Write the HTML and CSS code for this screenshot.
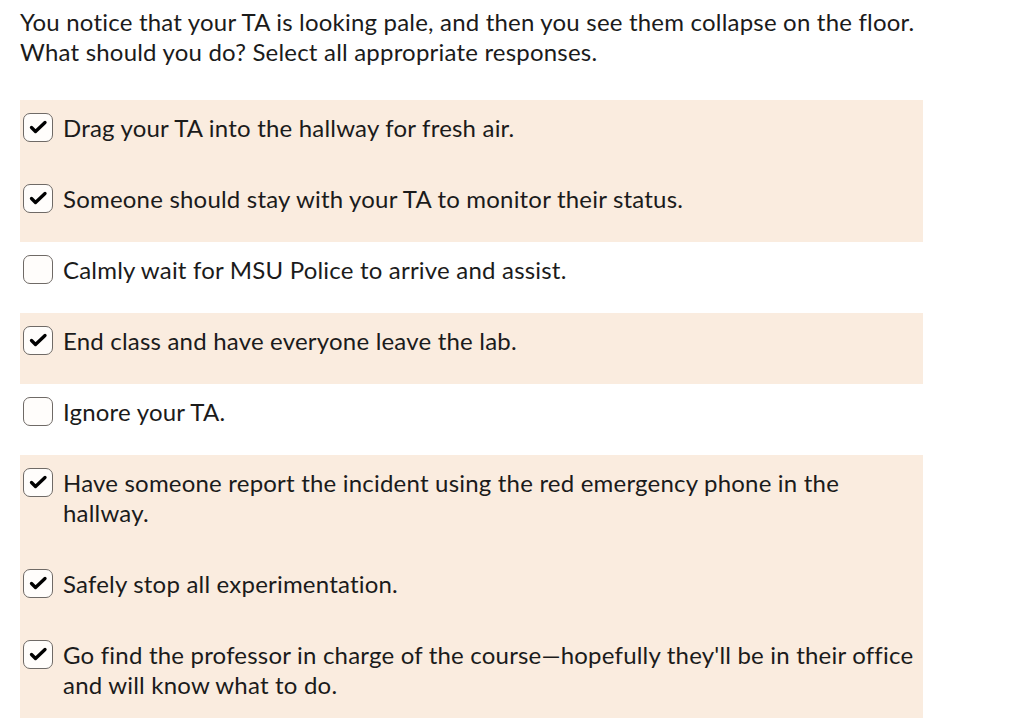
FILE: index.html
```html
<!DOCTYPE html>
<html>
<head>
<meta charset="utf-8">
<link rel="stylesheet" href="styles.css">
</head>
<body>
<div class="page">
  <p class="question">You notice that your TA is looking pale, and then you see them collapse on the floor. What should you do? Select all appropriate responses.</p>
  <ul class="options">
    <li class="option selected"><span class="box"><svg viewBox="0 0 28 27" width="28" height="27"><path d="M7.5 13.5 L11.5 17.5 L21 8.5" fill="none" stroke="#000" stroke-width="3.3" stroke-linecap="round" stroke-linejoin="round"/></svg></span><span class="label">Drag your TA into the hallway for fresh air.</span></li>
    <li class="option selected"><span class="box"><svg viewBox="0 0 28 27" width="28" height="27"><path d="M7.5 13.5 L11.5 17.5 L21 8.5" fill="none" stroke="#000" stroke-width="3.3" stroke-linecap="round" stroke-linejoin="round"/></svg></span><span class="label">Someone should stay with your TA to monitor their status.</span></li>
    <li class="option"><span class="box"></span><span class="label">Calmly wait for MSU Police to arrive and assist.</span></li>
    <li class="option selected"><span class="box"><svg viewBox="0 0 28 27" width="28" height="27"><path d="M7.5 13.5 L11.5 17.5 L21 8.5" fill="none" stroke="#000" stroke-width="3.3" stroke-linecap="round" stroke-linejoin="round"/></svg></span><span class="label">End class and have everyone leave the lab.</span></li>
    <li class="option"><span class="box"></span><span class="label">Ignore your TA.</span></li>
    <li class="option selected"><span class="box"><svg viewBox="0 0 28 27" width="28" height="27"><path d="M7.5 13.5 L11.5 17.5 L21 8.5" fill="none" stroke="#000" stroke-width="3.3" stroke-linecap="round" stroke-linejoin="round"/></svg></span><span class="label">Have someone report the incident using the red emergency phone in the hallway.</span></li>
    <li class="option selected"><span class="box"><svg viewBox="0 0 28 27" width="28" height="27"><path d="M7.5 13.5 L11.5 17.5 L21 8.5" fill="none" stroke="#000" stroke-width="3.3" stroke-linecap="round" stroke-linejoin="round"/></svg></span><span class="label">Safely stop all experimentation.</span></li>
    <li class="option selected"><span class="box"><svg viewBox="0 0 28 27" width="28" height="27"><path d="M7.5 13.5 L11.5 17.5 L21 8.5" fill="none" stroke="#000" stroke-width="3.3" stroke-linecap="round" stroke-linejoin="round"/></svg></span><span class="label">Go find the professor in charge of the course—hopefully they'll be in their office and will know what to do.</span></li>
  </ul>
</div>
</body>
</html>
```
FILE: styles.css
```css
html, body {
  margin: 0;
  padding: 0;
  background: #ffffff;
}
body {
  font-family: Lato, "Noto Sans", sans-serif;
  font-size: 24px;
  letter-spacing: 0.2px;
  line-height: 30px;
  color: #1b1b1b;
}
.page {
  padding: 7px 0 0 20px;
  width: 903px;
}
.question {
  margin: 0 0 33px 0;
}
.options {
  list-style: none;
  margin: 0;
  padding: 0;
}
.option {
  display: flex;
  align-items: flex-start;
  padding: 13px 8px 28px 3px;
}
.option.selected {
  background: #faecdf;
}
.box {
  flex: none;
  width: 28px;
  height: 27px;
  margin-top: 0;
  border: 1px solid #6f6a66;
  border-radius: 7px;
  background: #fffdfb;
  margin-right: 10px;
  display: flex;
  align-items: center;
  justify-content: center;
}
.box svg {
  display: block;
}
.label {
  flex: 1;
}
```
